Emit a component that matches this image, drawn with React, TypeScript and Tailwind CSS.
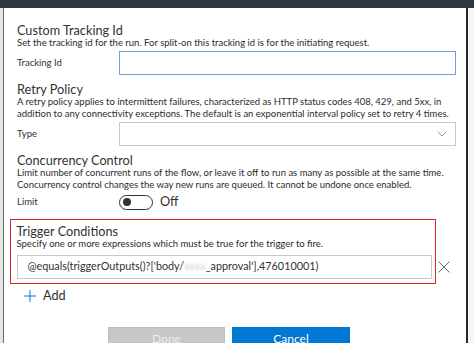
import React from "react";

const font = { fontFamily: 'Lato, "Open Sans", sans-serif' };

export default function App() {
  return (
    <div className="w-[474px] h-[343px] overflow-hidden bg-[#f3f3f3] flex flex-col text-[#323130]" style={font}>
      <div className="h-[8px] shrink-0 bg-[#2f3741]" />
      <div className="flex flex-1 min-h-0">
        <div className="w-[3px] bg-[#e4e4e4]" />
        <div className="w-[1px] bg-[#6b6b6b]" />
        <div className="flex-1 bg-white pl-[13px] flex flex-col">
          <div className="mt-[15px] text-[12.7px] leading-[14px]">Custom Tracking Id</div>
          <div className="text-[9.5px] leading-[12px] text-[#2b2b2b]">
            Set the tracking id for the run. For split-on this tracking id is for the initiating request.
          </div>
          <div className="flex items-center h-[24px] mt-[2px]">
            <div className="w-[102px] text-[9.5px]">Tracking Id</div>
            <div className="w-[337px] h-[24px] border border-[#6e9fd8]" />
          </div>
          <div className="mt-[7px] text-[12.7px] leading-[14px]">Retry Policy</div>
          <div className="text-[9.5px] leading-[12px] whitespace-nowrap text-[#2b2b2b]">
            <div>A retry policy applies to intermittent failures, characterized as HTTP status codes 408, 429, and 5xx, in</div>
            <div>addition to any connectivity exceptions. The default is an exponential interval policy set to retry 4 times.</div>
          </div>
          <div className="flex items-center h-[24px] mt-[2px]">
            <div className="w-[102px] text-[9.5px]">Type</div>
            <div className="w-[337px] h-[24px] border border-[#c8c8c8] flex items-center justify-end pr-[8px]">
              <svg width="10" height="6" viewBox="0 0 10 6" fill="none">
                <path d="M0.5 0.5 L5 5 L9.5 0.5" stroke="#888" strokeWidth="0.9" />
              </svg>
            </div>
          </div>
          <div className="mt-[7px] text-[12.7px] leading-[14px]">Concurrency Control</div>
          <div className="text-[9.5px] leading-[12px] whitespace-nowrap text-[#2b2b2b]">
            <div>Limit number of concurrent runs of the flow, or leave it off to run as many as possible at the same time.</div>
            <div>Concurrency control changes the way new runs are queued. It cannot be undone once enabled.</div>
          </div>
          <div className="flex items-center h-[16px] mt-[3px]">
            <div className="w-[102px] text-[9.5px]">Limit</div>
            <div className="w-[34px] h-[15px] rounded-full border border-[#333] flex items-center pl-[3px]">
              <div className="w-[8px] h-[8px] rounded-full bg-[#333]" />
            </div>
            <div className="ml-[7px] text-[12.7px]">Off</div>
          </div>
          <div className="flex items-end mt-[9px] ml-[-7px]">
            <div className="w-[426px] h-[65px] border-[1.5px] border-[#d9262c] pl-[5.5px] pr-[3.5px] flex flex-col">
              <div className="mt-[3.5px] text-[12.7px] leading-[14px]">Trigger Conditions</div>
              <div className="text-[9.5px] leading-[12px] text-[#2b2b2b]">
                Specify one or more expressions which must be true for the trigger to fire.
              </div>
              <div className="mt-[5px] h-[24px] shrink-0 border border-[#c8c8c8] flex items-center pl-[10px] text-[10.8px] whitespace-nowrap">
                <span>@equals(triggerOutputs()?['body/</span>
                <span className="text-[#cfcfcf] blur-[1px]">xxxx</span>
                <span>_approval'],476010001)</span>
              </div>
            </div>
            <svg className="ml-[2px] mb-[11px]" width="12" height="12" viewBox="0 0 12 12" fill="none">
              <path d="M0.5 0.5 L11.5 11.5 M11.5 0.5 L0.5 11.5" stroke="#666" strokeWidth="1" />
            </svg>
          </div>
          <div className="flex items-center h-[16px] mt-[4px] pl-[7px]">
            <svg width="12" height="12" viewBox="0 0 12 12" fill="none">
              <path d="M6 0 V12 M0 6 H12" stroke="#0078d4" strokeWidth="1" />
            </svg>
            <span className="ml-[7px] text-[12.7px]">Add</span>
          </div>
          <div className="flex mt-[23px] pl-[91px] gap-[7px]">
            <div className="w-[117px] h-[24px] shrink-0 bg-[#c8c8c8] border border-[#bdbdbd] text-[#ececec] text-[12px] flex items-center justify-center">Done</div>
            <div className="w-[118px] h-[24px] shrink-0 bg-[#0078d4] text-white text-[12px] flex items-center justify-center">Cancel</div>
          </div>
        </div>
        <div className="w-[2px] bg-[#2a2a2a]" />
        <div className="w-[6px] bg-[#f5f5f5]" />
      </div>
    </div>
  );
}
